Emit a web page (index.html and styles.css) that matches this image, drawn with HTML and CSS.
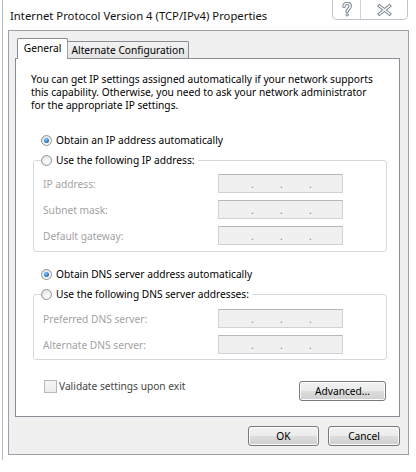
FILE: index.html
```html
<!DOCTYPE html>
<html>
<head>
<meta charset="utf-8">
<link rel="stylesheet" href="styles.css">
</head>
<body>
<div class="frame">
  <div class="titlebar">
    <div class="title">Internet Protocol Version 4 (TCP/IPv4) Properties</div>
    <div class="caption-buttons">
      <div class="cap-btn help">
        <svg width="10" height="15" viewBox="0 0 10 15">
          <g fill="none" stroke-linecap="round" stroke-linejoin="round">
            <path d="M2 4.6 C2 2.4 3.4 1.4 5 1.4 C7 1.4 8.2 2.6 8.2 4.3 C8.2 6.6 5.2 7 5.2 9.6" stroke="#7d8694" stroke-width="3.4"/>
            <path d="M2 4.6 C2 2.4 3.4 1.4 5 1.4 C7 1.4 8.2 2.6 8.2 4.3 C8.2 6.6 5.2 7 5.2 9.6" stroke="#fff" stroke-width="1.4"/>
            <circle cx="5.2" cy="12.8" r="1.2" stroke="#7d8694" stroke-width="1"/>
          </g>
        </svg>
      </div>
      <div class="cap-btn close">
        <svg width="15" height="12" viewBox="0 0 15 12">
          <g fill="none" stroke-linecap="square">
            <path d="M2.5 2 L12.5 10 M12.5 2 L2.5 10" stroke="#7d8694" stroke-width="3.4"/>
            <path d="M2.5 2 L12.5 10 M12.5 2 L2.5 10" stroke="#fff" stroke-width="1.4"/>
          </g>
        </svg>
      </div>
    </div>
  </div>
  <div class="client">
    <div class="tabs">
      <div class="tab active">General</div>
      <div class="tab">Alternate Configuration</div>
    </div>
    <div class="page">
      <p class="intro">You can get IP settings assigned automatically if your network supports<br>this capability. Otherwise, you need to ask your network administrator<br>for the appropriate IP settings.</p>

      <div class="radio-row first"><span class="radio checked"></span>Obtain an IP address automatically</div>
      <fieldset class="group g1">
        <legend class="radio-row"><span class="radio"></span>Use the following IP address:</legend>
        <div class="field"><span class="lbl">IP address:</span><span class="ip"><i>.</i><i>.</i><i>.</i></span></div>
        <div class="field"><span class="lbl">Subnet mask:</span><span class="ip"><i>.</i><i>.</i><i>.</i></span></div>
        <div class="field"><span class="lbl">Default gateway:</span><span class="ip"><i>.</i><i>.</i><i>.</i></span></div>
      </fieldset>

      <div class="radio-row dns"><span class="radio checked"></span>Obtain DNS server address automatically</div>
      <fieldset class="group g2">
        <legend class="radio-row"><span class="radio"></span>Use the following DNS server addresses:</legend>
        <div class="field"><span class="lbl">Preferred DNS server:</span><span class="ip"><i>.</i><i>.</i><i>.</i></span></div>
        <div class="field"><span class="lbl">Alternate DNS server:</span><span class="ip"><i>.</i><i>.</i><i>.</i></span></div>
      </fieldset>

      <div class="bottom-row">
        <div class="check-row"><span class="checkbox"></span>Validate settings upon exit</div>
        <div class="btn adv">Advanced...</div>
      </div>
    </div>
    <div class="footer">
      <div class="btn ok">OK</div>
      <div class="btn cancel">Cancel</div>
    </div>
  </div>
</div>
</body>
</html>
```
FILE: styles.css
```css
html, body {
  margin: 0;
  padding: 0;
  background: #ffffff;
}
body {
  width: 416px;
  height: 472px;
  overflow: hidden;
  font-family: "Noto Sans", "Open Sans", sans-serif;
  font-size: 10.2px;
  color: #000;
}
.frame {
  margin-left: 2px;
  height: 460px;
  border-left: 1px solid #b4bcc8;
  box-sizing: border-box;
}
.titlebar {
  height: 30px;
  display: flex;
  justify-content: space-between;
  align-items: flex-start;
  padding: 0 8px 0 7px;
}
.title {
  font-size: 11.3px;
  line-height: 16px;
  margin-top: 8px;
  color: #111;
}
.caption-buttons {
  display: flex;
  height: 20px;
  box-sizing: border-box;
  border: 1px solid #bcc3cd;
  border-top: none;
  border-radius: 0 0 5px 5px;
  background: #fff;
}
.cap-btn {
  display: flex;
  align-items: center;
  justify-content: center;
}
.help {
  width: 27px;
  border-right: 1px solid #cdd3db;
}
.close {
  width: 46px;
}
.client {
  margin: 0 7px 0 5px;
  height: 425px;
  box-sizing: border-box;
  border: 1px solid #9ca1a8;
  background: #f0f0f0;
  padding: 7px 8px 0 6px;
  display: flex;
  flex-direction: column;
}
.tabs {
  display: flex;
  align-items: flex-end;
  height: 20px;
  padding-left: 2px;
  position: relative;
  z-index: 1;
}
.tab {
  box-sizing: border-box;
  border: 1px solid #898c95;
  border-bottom: none;
  border-radius: 2px 2px 0 0;
  text-align: center;
  color: #000;
}
.tab.active {
  width: 51px;
  height: 21px;
  margin-bottom: -1px;
  background: #fff;
  line-height: 19px;
}
.tab:not(.active) {
  width: 122px;
  height: 17px;
  margin-left: -1px;
  border-left-color: #a0a3aa;
  background: linear-gradient(#f2f2f2, #e3e3e3);
  line-height: 16px;
}
.page {
  height: 359px;
  box-sizing: border-box;
  border: 1px solid #898c95;
  background: #fff;
  padding: 14px 12px 0 15px;
}
.intro {
  margin: 0;
  line-height: 13px;
  white-space: nowrap;
}
.radio-row {
  display: flex;
  align-items: center;
  height: 16px;
  white-space: nowrap;
}
.radio-row.first {
  margin-top: 20px;
  margin-left: 10px;
}
.radio-row.dns {
  margin-top: 14px;
  margin-left: 10px;
}
.radio {
  display: inline-block;
  width: 11px;
  height: 11px;
  box-sizing: border-box;
  border-radius: 50%;
  border: 1px solid #959595;
  background: radial-gradient(circle at 60% 65%, #ffffff 0%, #f2f2f2 40%, #d6d6d6 100%);
  margin-right: 4px;
  position: relative;
  flex: none;
}
.radio.checked::after {
  content: "";
  position: absolute;
  left: 2px;
  top: 2px;
  width: 5px;
  height: 5px;
  border-radius: 50%;
  background: radial-gradient(circle at 40% 35%, #9fd0f8 0%, #3a86d4 45%, #1a4f95 100%);
}
.group {
  margin: 4px 0 0 2px;
  border: 1px solid #d5d9de;
  border-radius: 3px;
  padding: 6px 43px 6px 9px;
  min-width: 0;
}
.group.g2 {
  padding-top: 7px;
  padding-bottom: 5px;
}
.group legend {
  padding: 0 3px 0 0;
  margin-left: -2px;
}
.field {
  display: flex;
  align-items: center;
  height: 19px;
}
.field + .field {
  margin-top: 7px;
}
.lbl {
  flex: 1;
  color: #a2a2a2;
  white-space: nowrap;
}
.ip {
  width: 125px;
  height: 19px;
  box-sizing: border-box;
  background: #f0f0f0;
  border: 1px solid #cfd2d6;
  border-top-color: #b4b7bc;
  display: flex;
  align-items: center;
  padding-left: 32px;
  gap: 27px;
}
.ip i {
  font-style: normal;
  color: #8a8a8a;
  width: 2px;
  line-height: 10px;
  margin-top: 1px;
}
.bottom-row {
  display: flex;
  justify-content: space-between;
  align-items: flex-start;
  margin-top: 19px;
  margin-right: 1px;
}
.check-row {
  display: flex;
  align-items: center;
  height: 14px;
  margin-left: 13px;
  color: #444;
  white-space: nowrap;
}
.checkbox {
  width: 13px;
  height: 13px;
  box-sizing: border-box;
  border: 1px solid #b8b8b8;
  background: linear-gradient(#f6f6f6, #ececec);
  margin-right: 2px;
  flex: none;
}
.btn {
  box-sizing: border-box;
  height: 20px;
  border: 1px solid #7a7a7a;
  border-radius: 3px;
  background: linear-gradient(#f2f2f2 0%, #ebebeb 50%, #dddddd 50%, #cfcfcf 100%);
  box-shadow: inset 0 0 0 1px #fbfbfb;
  display: flex;
  align-items: center;
  justify-content: center;
  color: #000;
}
.btn.adv {
  width: 87px;
  margin-top: 2px;
}
.footer {
  display: flex;
  justify-content: flex-end;
  gap: 9px;
  margin-top: 9px;
}
.btn.ok {
  width: 71px;
}
.btn.cancel {
  width: 72px;
}
```
